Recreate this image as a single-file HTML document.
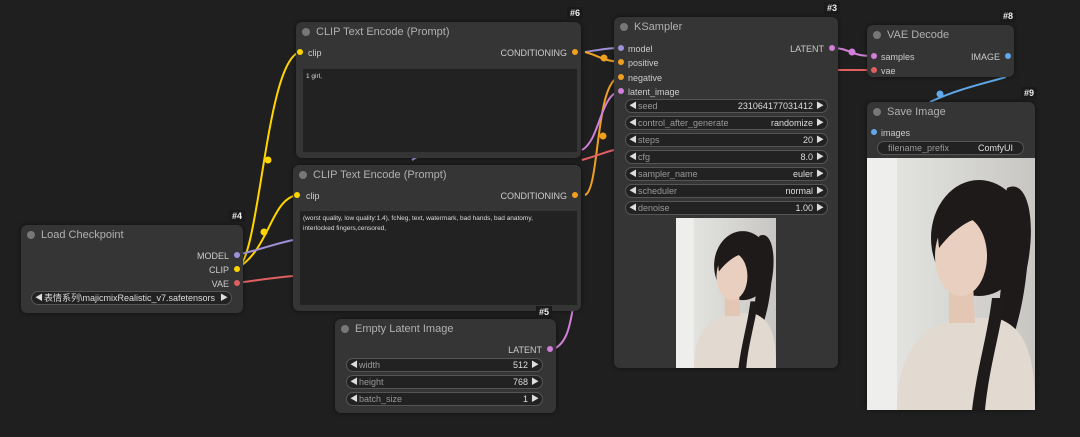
<!DOCTYPE html>
<html><head><meta charset="utf-8"><style>
*{box-sizing:border-box;margin:0;padding:0}
body{width:1080px;height:437px;overflow:hidden;background:#1f1f1f;font-family:"Liberation Sans","Noto Sans CJK SC",sans-serif;position:relative;color:#aaa}
.node{position:absolute;background:#353535;border-radius:6px;box-shadow:0 0 4px rgba(0,0,0,.5)}
.title{position:absolute;left:0;right:0;top:0;height:20px;font-size:11px;color:#b0b0b0;padding-left:20px;line-height:20px}
.title:before{content:"";position:absolute;left:6px;top:6px;width:8px;height:8px;border-radius:50%;background:#777}
.id{position:absolute;right:-2px;top:-15px;font-size:9px;font-weight:bold;color:#eee;background:#1a1a1a;padding:0 3px;line-height:12px}
.slot{position:absolute;font-size:9px;color:#ccc;line-height:10px}
.dot{position:absolute;width:6px;height:6px;border-radius:50%}
.w{position:absolute;height:14px;background:#222;border:1px solid #555;border-radius:7px;font-size:9px;line-height:12px;color:#999}
.w .l{position:absolute;left:12px}
.w .v{position:absolute;right:14px;color:#ddd}
.w:before{content:"◀";position:absolute;left:3px;font-size:8px;color:#ddd}
.w:after{content:"▶";position:absolute;right:3px;font-size:8px;color:#ddd}
.w.na:before,.w.na:after{content:none}
.ta{position:absolute;background:#222;font-size:6.5px;color:#ddd;padding:3px;line-height:10px}
</style></head><body>
<svg width="1080" height="437" style="position:absolute;left:0;top:0" fill="none" stroke-width="2">
<path d="M236 269 C260 265,265 60,300 52" stroke="#ffd500"/>
<path d="M236 269 C270 250,270 200,297 195" stroke="#ffd500"/>
<path d="M236 255 C260 250,270 245,293 240" stroke="#a090d8"/>
<path d="M236 283 C260 280,270 278,293 276" stroke="#e06060"/>
<path d="M585 52 C600 50,605 48,620 48" stroke="#a090d8"/>
<path d="M585 52 C600 56,600 60,620 62" stroke="#f0a020"/>
<path d="M585 195 C600 190,595 80,620 77" stroke="#f0a020"/>
<path d="M550 350 C575 345,570 300,580 280" stroke="#d080d8"/>
<path d="M582 150 C600 140,600 95,620 91" stroke="#d080d8"/>
<path d="M582 160 C600 155,605 152,614 150" stroke="#e06060"/>
<path d="M832 48 C850 48,850 56,872 56" stroke="#d080d8"/>
<path d="M838 70 C850 70,855 70,872 70" stroke="#e06060"/>
<path d="M1006 77 C990 82,960 88,930 102" stroke="#60a8e8"/>
<path d="M412 160 L420 155" stroke="#a090d8"/>
<circle cx="268" cy="160" r="3.5" fill="#ffd500"/><circle cx="264" cy="232" r="3.5" fill="#ffd500"/>
<circle cx="604" cy="58" r="3.5" fill="#f0a020"/><circle cx="603" cy="136" r="3.5" fill="#f0a020"/>
<circle cx="852" cy="52" r="3.5" fill="#d080d8"/><circle cx="940" cy="94" r="3.5" fill="#60a8e8"/>
</svg>

<div class="node" style="left:296px;top:22px;width:285px;height:136px">
<div class="title">CLIP Text Encode (Prompt)</div><div class="id">#6</div>
<div class="dot" style="left:1px;top:27px;background:#ffd500"></div><div class="slot" style="left:12px;top:26px">clip</div>
<div class="slot" style="right:14px;top:26px">CONDITIONING</div><div class="dot" style="right:3px;top:27px;background:#f0a020"></div>
<div class="ta" style="left:7px;top:47px;width:274px;height:83px">1 girl,</div></div>

<div class="node" style="left:293px;top:165px;width:288px;height:146px">
<div class="title">CLIP Text Encode (Prompt)</div>
<div class="dot" style="left:1px;top:27px;background:#ffd500"></div><div class="slot" style="left:13px;top:26px">clip</div>
<div class="slot" style="right:14px;top:26px">CONDITIONING</div><div class="dot" style="right:3px;top:27px;background:#f0a020"></div>
<div class="ta" style="left:7px;top:46px;width:277px;height:94px">(worst quality, low quality:1.4), fcNeg, text, watermark, bad hands, bad anatomy,<br>interlocked fingers,censored,</div></div>

<div class="node" style="left:21px;top:225px;width:222px;height:88px">
<div class="title" style="top:0">Load Checkpoint</div><div class="id">#4</div>
<div class="slot" style="right:14px;top:26px">MODEL</div><div class="dot" style="right:3px;top:27px;background:#a090d8"></div>
<div class="slot" style="right:14px;top:40px">CLIP</div><div class="dot" style="right:3px;top:41px;background:#ffd500"></div>
<div class="slot" style="right:14px;top:54px">VAE</div><div class="dot" style="right:3px;top:55px;background:#e06060"></div>
<div class="w" style="left:10px;top:66px;width:201px"><span class="l" style="color:#ddd">表情系列\majicmixRealistic_v7.safetensors</span></div></div>

<div class="node" style="left:335px;top:319px;width:221px;height:94px">
<div class="title">Empty Latent Image</div><div class="id" style="top:-13px;right:4px">#5</div>
<div class="slot" style="right:14px;top:26px">LATENT</div><div class="dot" style="right:3px;top:27px;background:#d080d8"></div>
<div class="w" style="left:11px;top:39px;width:197px"><span class="l">width</span><span class="v">512</span></div>
<div class="w" style="left:11px;top:56px;width:197px"><span class="l">height</span><span class="v">768</span></div>
<div class="w" style="left:11px;top:73px;width:197px"><span class="l">batch_size</span><span class="v">1</span></div></div>

<div class="node" style="left:614px;top:17px;width:224px;height:351px">
<div class="title">KSampler</div><div class="id">#3</div>
<div class="dot" style="left:4px;top:28px;background:#a090d8"></div><div class="slot" style="left:14px;top:27px">model</div>
<div class="dot" style="left:4px;top:42px;background:#f0a020"></div><div class="slot" style="left:14px;top:41px">positive</div>
<div class="dot" style="left:4px;top:57px;background:#f0a020"></div><div class="slot" style="left:14px;top:56px">negative</div>
<div class="dot" style="left:4px;top:71px;background:#d080d8"></div><div class="slot" style="left:14px;top:70px">latent_image</div>
<div class="slot" style="right:14px;top:27px">LATENT</div><div class="dot" style="right:3px;top:28px;background:#d080d8"></div>
<div class="w" style="left:11px;top:82px;width:203px"><span class="l">seed</span><span class="v">231064177031412</span></div>
<div class="w" style="left:11px;top:99px;width:203px"><span class="l">control_after_generate</span><span class="v">randomize</span></div>
<div class="w" style="left:11px;top:116px;width:203px"><span class="l">steps</span><span class="v">20</span></div>
<div class="w" style="left:11px;top:133px;width:203px"><span class="l">cfg</span><span class="v">8.0</span></div>
<div class="w" style="left:11px;top:150px;width:203px"><span class="l">sampler_name</span><span class="v">euler</span></div>
<div class="w" style="left:11px;top:167px;width:203px"><span class="l">scheduler</span><span class="v">normal</span></div>
<div class="w" style="left:11px;top:184px;width:203px"><span class="l">denoise</span><span class="v">1.00</span></div>
<svg style="position:absolute;left:62px;top:201px" width="100" height="150" viewBox="0 0 168 252"><use href="#photo"/></svg>
</div>

<div class="node" style="left:867px;top:25px;width:147px;height:52px">
<div class="title">VAE Decode</div><div class="id">#8</div>
<div class="dot" style="left:4px;top:28px;background:#d080d8"></div><div class="slot" style="left:14px;top:27px">samples</div>
<div class="dot" style="left:4px;top:42px;background:#e06060"></div><div class="slot" style="left:14px;top:41px">vae</div>
<div class="slot" style="right:14px;top:27px">IMAGE</div><div class="dot" style="right:3px;top:28px;background:#60a8e8"></div></div>

<div class="node" style="left:867px;top:102px;width:168px;height:308px;overflow:visible">
<div class="title">Save Image</div><div class="id">#9</div>
<div class="dot" style="left:4px;top:27px;background:#60a8e8"></div><div class="slot" style="left:14px;top:26px">images</div>
<div class="w na" style="left:10px;top:39px;width:147px"><span class="l" style="left:10px">filename_prefix</span><span class="v" style="right:10px">ComfyUI</span></div>
<svg style="position:absolute;left:0;top:56px" width="168" height="252" viewBox="0 0 168 252">
<defs><linearGradient id="bg" x1="0" x2="1"><stop offset="0" stop-color="#e8e8e6"/><stop offset=".5" stop-color="#d8d8d4"/><stop offset="1" stop-color="#c8c6c2"/></linearGradient></defs>
<g id="photo">
<rect width="168" height="252" fill="url(#bg)"/>
<rect x="0" y="0" width="30" height="252" fill="#eeeeec"/>
<ellipse cx="112" cy="80" rx="48" ry="58" fill="#1d1a19"/>
<path d="M140 30 C160 20,170 60,160 110 C155 160,145 180,140 200 L128 200 C130 150,140 100,138 40Z" fill="#1d1a19"/>
<path d="M30 252 C30 200,50 170,90 160 L130 160 C160 170,168 200,168 252Z" fill="#e2dad0"/>
<path d="M82 130 L82 165 L108 165 L106 125Z" fill="#e3c6b4"/>
<ellipse cx="94" cy="98" rx="26" ry="40" fill="#e9cfbf"/>
<path d="M70 70 C80 40,120 35,132 60 C120 55,95 60,72 90Z" fill="#1d1a19"/>
<path d="M125 140 C120 180,110 210,105 252 L118 252 C122 210,132 180,138 140Z" fill="#1f1b1a"/>
</g></svg>
</div>
</body></html>
